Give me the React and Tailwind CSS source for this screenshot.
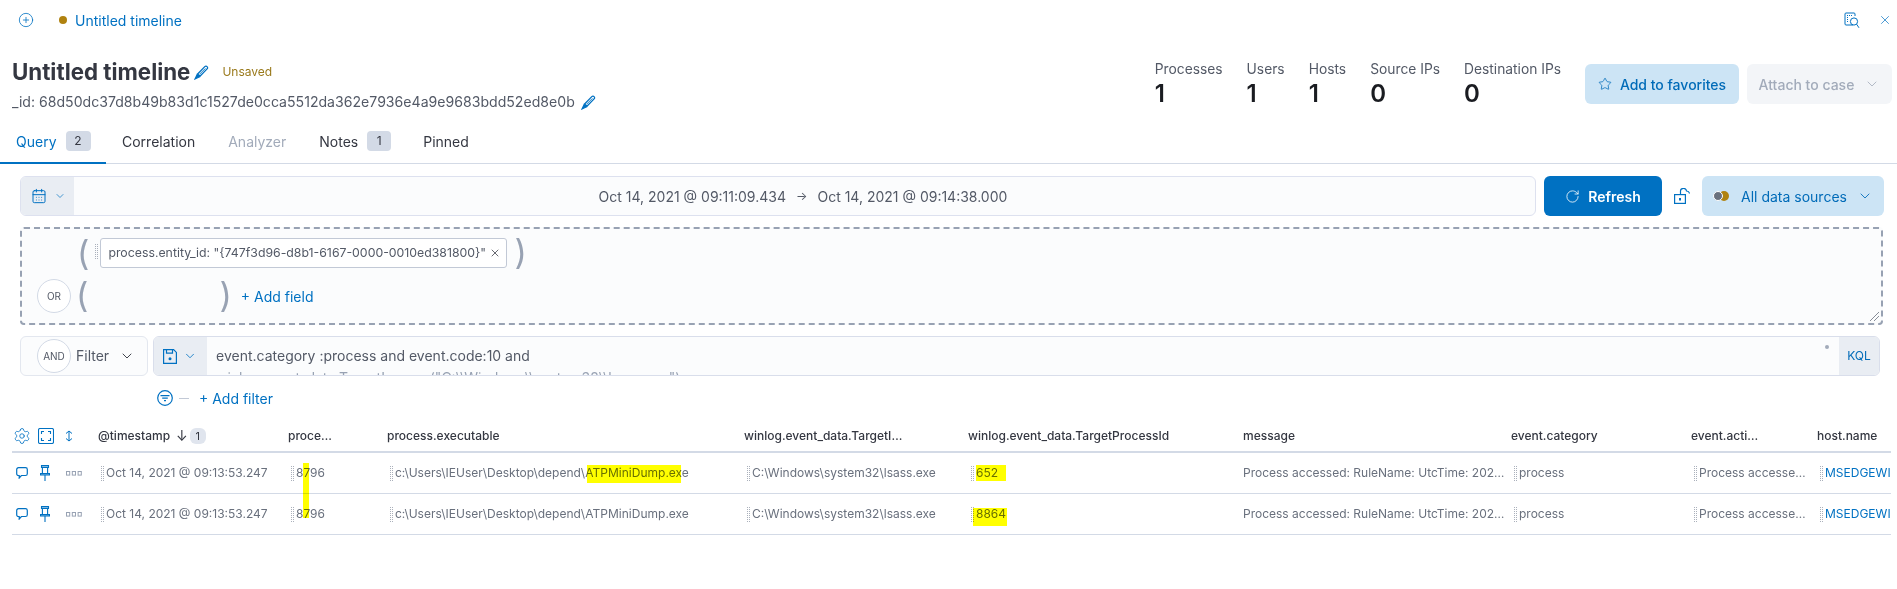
import React from "react";
import { CalendarDays, ChevronDown, CirclePlus, RotateCw, Settings, Star, X } from "lucide-react";

const gridCols =
  "grid grid-cols-[86px_190px_99px_357px_224px_275px_268px_180px_126px_74px]";

const stats = [
  { label: "Processes", value: "1" },
  { label: "Users", value: "1" },
  { label: "Hosts", value: "1" },
  { label: "Source IPs", value: "0" },
  { label: "Destination IPs", value: "0" },
];

const rows = ["652", "8864"];

const Grip = () => (
  <span className="mr-[2px] ml-[3px] inline-block h-[15px] w-[3px] shrink-0 border-x border-dotted border-[#aab0bb]" />
);

const Cell = ({ children, blue }) => (
  <div
    className={`flex items-center overflow-hidden whitespace-nowrap ${
      blue ? "text-[#0071c2]" : "text-[#69707d]"
    }`}
  >
    <Grip />
    {children}
  </div>
);

const Paren = ({ children }) => (
  <span className="text-[34px] leading-[30px] font-normal text-[#98a2b3]">
    {children}
  </span>
);

const Logical = ({ children }) => (
  <span className="flex h-[34px] w-[34px] shrink-0 items-center justify-center rounded-full border border-[#d3dae6] bg-white text-[10px] text-[#535966]">
    {children}
  </span>
);

const pencilIcon = (
  <svg width="15" height="15" viewBox="0 0 15 15" fill="none" stroke="#0071c2" strokeWidth="1.3">
    <path d="M3.6 9 10.8 1.6a1.6 1.6 0 0 1 2.3 0 1.6 1.6 0 0 1 0 2.3L5.9 11.3z" />
    <path d="m5.4 9.4 6-6" strokeWidth="0.9" />
    <path d="M3.2 9.6 1.2 13.8l4.2-2z" fill="#0071c2" />
  </svg>
);

const commentIcon = (
  <svg width="12" height="12" viewBox="0 0 12 12" fill="none" stroke="#0071c2" strokeWidth="1.2">
    <path d="M2.5.7h7a1.8 1.8 0 0 1 1.8 1.8v4.2A1.8 1.8 0 0 1 9.5 8.5H5.4L3.2 11V8.5h-.7A1.8 1.8 0 0 1 .7 6.7V2.5A1.8 1.8 0 0 1 2.5.7z" />
  </svg>
);

const pinIcon = (
  <svg width="10" height="16" viewBox="0 0 10 16" fill="none" stroke="#0071c2" strokeWidth="1.1">
    <path d="M1.5.6h7v1.8h-7zM2.4 2.4v6.1h5.2V2.4M.5 8.5h9v1.4h-9zM5 9.9V16" />
  </svg>
);

const dotsIcon = (
  <svg width="16" height="5" viewBox="0 0 16 5" fill="none" stroke="#98a2b3" strokeWidth="1">
    <rect x="0.5" y="0.5" width="3.2" height="3.6" />
    <rect x="6.3" y="0.5" width="3.2" height="3.6" />
    <rect x="12.1" y="0.5" width="3.2" height="3.6" />
  </svg>
);

const fullScreenIcon = (
  <svg width="16" height="16" viewBox="0 0 16 16" fill="none" stroke="#0071c2" strokeWidth="1.1">
    <rect x="0.5" y="0.5" width="15" height="15" rx="1.5" />
    <path d="M3.5 6V3.5H6M10 3.5h2.5V6M12.5 10v2.5H10M6 12.5H3.5V10" />
  </svg>
);

const sortIcon = (
  <svg width="8" height="12" viewBox="0 0 8 12" fill="none" stroke="#0071c2" strokeWidth="1">
    <path d="M1 3.5 4 1l3 2.5M1 8.5 4 11l3-2.5M4 1v10" />
  </svg>
);

const inspectIcon = (
  <svg width="16" height="17" viewBox="0 0 16 17" fill="none" stroke="#0071c2" strokeWidth="1">
    <path d="M9 13H2a1 1 0 0 1-1-1V2a1 1 0 0 1 1-1h8a1 1 0 0 1 1 1v2" />
    <path d="M3 3.5h6M3 5.5h1M3 7.5h1M3 9.5h1" strokeDasharray="1 1" />
    <circle cx="10" cy="9.5" r="3.6" />
    <path d="m12.6 12.2 2.4 3.6" />
  </svg>
);

const filterIcon = (
  <svg width="16" height="16" viewBox="0 0 16 16" fill="none" stroke="#0071c2" strokeWidth="1.2">
    <circle cx="8" cy="8" r="7.3" />
    <path d="M3.5 5.7h9M5.2 8.2h5.6M7 10.7h2" />
  </svg>
);

const saveIcon = (
  <svg width="14" height="15" viewBox="0 0 14 15" fill="none" stroke="#0071c2" strokeWidth="1.2">
    <path d="M.6.6h10l2.8 2.8v11H.6z" />
    <path d="M3.5.6v3.6h6V.6" />
    <circle cx="7" cy="9.8" r="1.5" fill="#0071c2" stroke="none" />
  </svg>
);

const lockIcon = (
  <svg width="16" height="16" viewBox="0 0 16 16" fill="none" stroke="#0071c2" strokeWidth="1.2">
    <rect x="0.6" y="6.6" width="10.8" height="8.8" />
    <path d="M6 10v2.4" strokeWidth="2" />
    <path d="M6.5 6.5V3.6a3 3 0 0 1 6-.6 3 3 0 0 1 3 2.5" />
  </svg>
);

const App = () => {
  return (
    <div className="relative h-[589px] w-full overflow-hidden bg-white font-['Inter',sans-serif] text-[14px] text-[#343741]">
      {/* top bar */}
      <div className="flex h-10 items-center pr-[5px] pl-[18px]">
        <CirclePlus size={16} strokeWidth={1.2} color="#0071c2" />
        <span className="ml-[25px] h-2 w-2 rounded-full bg-[#b0820f]" />
        <span className="ml-2 text-[#0071c2]">Untitled timeline</span>
        <span className="ml-auto">{inspectIcon}</span>
        <X size={14} strokeWidth={1.2} color="#0071c2" className="ml-[18px]" />
      </div>

      {/* title and stats */}
      <div className="flex h-[84px] justify-between pr-[5px] pl-3">
        <div className="pt-4">
          <div className="flex h-8 items-center">
            <span className="text-[22.3px] leading-8 font-bold">Untitled timeline</span>
            <span className="ml-1">{pencilIcon}</span>
            <span className="ml-[13px] text-xs text-[#9a7a1c]">Unsaved</span>
          </div>
          <div className="mt-1 flex h-5 items-center text-[14.1px] leading-5 text-[#535966]">
            _id: 68d50dc37d8b49b83d1c1527de0cca5512da362e7936e4a9e9683bdd52ed8e0b
            <span className="ml-1.5">{pencilIcon}</span>
          </div>
        </div>
        <div className="flex items-start pt-6">
          <div className="mr-6 flex gap-6">
            {stats.map((stat) => (
              <div key={stat.label} className="-mt-[5px] flex flex-col whitespace-nowrap">
                <span className="text-[13.8px] leading-5 text-[#535966]">{stat.label}</span>
                <span className="-mt-px text-2xl leading-8 font-semibold text-[#1a1c21]">{stat.value}</span>
              </div>
            ))}
          </div>
          <button className="flex h-10 w-[154px] items-center justify-center gap-2 rounded-md bg-[#cce4f5] font-medium text-[#006bb8]">
            <Star size={14} strokeWidth={1.3} />
            Add to favorites
          </button>
          <button className="ml-2 flex h-10 w-[145px] items-center justify-center gap-2.5 rounded-md bg-[#f3f5f8] font-medium text-[#a2abba]">
            Attach to case
            <ChevronDown size={16} strokeWidth={1.2} />
          </button>
        </div>
      </div>

      {/* tabs */}
      <div className="relative flex h-10 items-center border-b border-[#d3dae6] pb-[5px]">
        <div className="flex w-[106px] items-center pl-4 text-[#0071c2]">
          Query
          <span className="ml-[9px] flex h-5 w-[25px] items-center justify-center rounded-sm bg-[#d3dae6] text-xs text-[#343741]">2</span>
        </div>
        <span className="absolute -bottom-px left-0 h-0.5 w-[106px] bg-[#0071c2]" />
        <span className="ml-4">Correlation</span>
        <span className="ml-[33px] text-[#a2abba]">Analyzer</span>
        <span className="ml-[33px]">Notes</span>
        <span className="ml-[9px] flex h-5 w-6 items-center justify-center rounded-sm bg-[#d3dae6] text-xs">1</span>
        <span className="ml-8">Pinned</span>
      </div>

      {/* date picker row */}
      <div className="mt-3 flex h-10 pr-[13px] pl-5">
        <div className="flex flex-1 overflow-hidden rounded-md border border-[#dde1ef] bg-[#fbfcfd]">
          <div className="flex w-[53px] shrink-0 items-center gap-[7px] bg-[#e9edf3] pl-2.5">
            <CalendarDays size={16} strokeWidth={1.5} color="#0071c2" />
            <ChevronDown size={12} strokeWidth={1.4} color="#0071c2" />
          </div>
          <div className="flex flex-1 items-center justify-center pr-[3px] text-[#535966]">
            Oct 14, 2021 @ 09:11:09.434 <span className="mx-2.5 text-xs">→</span> Oct 14, 2021 @ 09:14:38.000
          </div>
        </div>
        <button className="ml-2 flex w-[118px] items-center justify-center gap-2 rounded-md bg-[#0071c2] font-semibold text-white">
          <RotateCw size={15} strokeWidth={1.3} />
          Refresh
        </button>
        <div className="flex w-10 items-center justify-center">{lockIcon}</div>
        <button className="flex w-[182px] items-center justify-center rounded-md bg-[#cce4f5] text-[#006bb8]">
          <span className="relative mr-2 h-2.5 w-4">
            <span className="absolute top-0 right-0 h-2.5 w-2.5 rounded-full bg-[#b0820f]" />
            <span className="absolute top-0 left-0 h-2.5 w-2.5 rounded-full border border-white bg-[#69707d]" />
          </span>
          <span className="ml-1">All data sources</span>
          <ChevronDown size={16} strokeWidth={1.3} className="ml-2.5" />
        </button>
      </div>

      {/* data providers */}
      <div className="relative mt-[11px] mr-[14px] ml-5 flex h-[98px] flex-col rounded border-2 border-dashed border-[#98a2b3] bg-[#fbfcfd] pl-[15px]">
        <div className="mt-[9px] flex h-[30px] items-center pl-[40px]">
          <Paren>(</Paren>
          <span className="ml-[3px]"><Grip /></span>
          <span className="flex h-[30px] w-[407px] items-center rounded-[3px] border border-[#c2c9d6] bg-white pl-[7px] text-[12.3px] whitespace-nowrap text-[#535966]">
            process.entity_id: "{"{"}747f3d96-d8b1-6167-0000-0010ed381800{"}"}"
            <X size={12} strokeWidth={1.5} className="ml-[3px]" color="#343741" />
          </span>
          <span className="ml-[7px]"><Paren>)</Paren></span>
        </div>
        <div className="mt-[11px] flex items-center">
          <Logical>OR</Logical>
          <span className="ml-[5px]"><Paren>(</Paren></span>
          <span className="ml-[131px]"><Paren>)</Paren></span>
          <span className="ml-[9px] text-[#0071c2]">+ Add field</span>
        </div>
        <svg className="absolute right-0.5 bottom-0.5" width="9" height="9" viewBox="0 0 9 9" stroke="#69707d" strokeWidth="0.8">
          <path d="M0 9 9 0M4 9l5-5" />
        </svg>
      </div>

      {/* filter row */}
      <div className="mt-[11px] flex h-10 pr-[17px] pl-5">
        <div className="flex w-[128px] items-center gap-[5px] rounded-md border border-[#e3e7ef] bg-[#fbfcfd] pl-4">
          <Logical>AND</Logical>
          <span className="-mt-0.5 text-[#535966]">Filter</span>
          <ChevronDown size={16} strokeWidth={1.4} className="ml-[5px]" />
        </div>
        <div className="ml-[5px] flex flex-1 overflow-hidden rounded-md border border-[#d9deeb] bg-[#fbfcfd]">
          <div className="flex w-[53px] shrink-0 items-center gap-[6px] bg-[#e9edf3] pl-[9px]">
            {saveIcon}
            <ChevronDown size={14} strokeWidth={1.4} color="#0071c2" />
          </div>
          <div className="h-[38px] flex-1 overflow-hidden pt-[9px] pl-[9px] leading-5 text-[#535966]">
            <div>event.category :process and event.code:10 and</div>
            <div className="mt-0.5 text-[#98a2b3]">winlog.event_data.TargetImage: ("C:\\Windows\\system32\\lsass.exe")</div>
          </div>
          <span className="mt-2 mr-2.5 h-1 w-1 rounded-full bg-[#a2abba]" />
          <div className="flex w-10 shrink-0 items-center justify-center bg-[#e9edf3] text-xs text-[#006bb8]">KQL</div>
        </div>
      </div>

      <div className="mt-3 flex h-5 items-center pl-[157px]">
        {filterIcon}
        <span className="ml-1.5 h-px w-2.5 bg-[#c2c9d6]" />
        <span className="ml-2.5 text-[#0071c2]">+ Add filter</span>
      </div>

      {/* table */}
      <div className="mt-[13px] ml-3 w-[1879px] overflow-hidden text-xs">
        <div className={`${gridCols} h-[30px] items-center font-medium whitespace-nowrap`}>
          <div className="flex items-center pl-px">
            <Settings size={18} strokeWidth={1.1} color="#0071c2" />
            <span className="ml-[7px]">{fullScreenIcon}</span>
            <span className="ml-[11px]">{sortIcon}</span>
          </div>
          <div className="flex items-center">
            @timestamp
            <span className="mr-0.5 ml-1.5 text-sm font-normal">↓</span>
            <span className="flex h-4 w-4 items-center justify-center rounded-md bg-[#e0e5ee] text-[11px] font-normal">1</span>
          </div>
          <div>proce…</div>
          <div>process.executable</div>
          <div>winlog.event_data.TargetI…</div>
          <div>winlog.event_data.TargetProcessId</div>
          <div>message</div>
          <div>event.category</div>
          <div>event.acti…</div>
          <div>host.name</div>
        </div>
        <div className="h-0.5 bg-[#d3dae6]" />
        {rows.map((targetId) => (
          <div key={targetId} className={`${gridCols} h-[41px] items-center border-b border-[#d3dae6]`}>
            <div className="flex items-center pl-1">
              {commentIcon}
              <span className="ml-3">{pinIcon}</span>
              <span className="ml-4">{dotsIcon}</span>
            </div>
            <Cell>Oct 14, 2021 @ 09:13:53.247</Cell>
            <Cell>8796</Cell>
            <Cell>c:\Users\IEUser\Desktop\depend\ATPMiniDump.exe</Cell>
            <Cell>C:\Windows\system32\lsass.exe</Cell>
            <Cell>{targetId}</Cell>
            <div className="whitespace-nowrap text-[#69707d]">Process accessed: RuleName: UtcTime: 202…</div>
            <Cell>process</Cell>
            <Cell>Process accesse…</Cell>
            <Cell blue>MSEDGEWIN10</Cell>
          </div>
        ))}
      </div>

      {/* yellow marker strokes */}
      <div className="pointer-events-none absolute top-[465px] left-[587px] h-[18px] w-[94px] bg-[#ffff00] mix-blend-multiply" />
      <div className="pointer-events-none absolute top-[463px] left-[303px] h-[55px] w-[6px] bg-[#ffff00] mix-blend-multiply" />
      <div className="pointer-events-none absolute top-[465px] left-[976px] h-4 w-[30px] bg-[#ffff00] mix-blend-multiply" />
      <div className="pointer-events-none absolute top-[508px] left-[973px] h-[18px] w-[34px] bg-[#ffff00] mix-blend-multiply" />
    </div>
  );
};

export default App;
